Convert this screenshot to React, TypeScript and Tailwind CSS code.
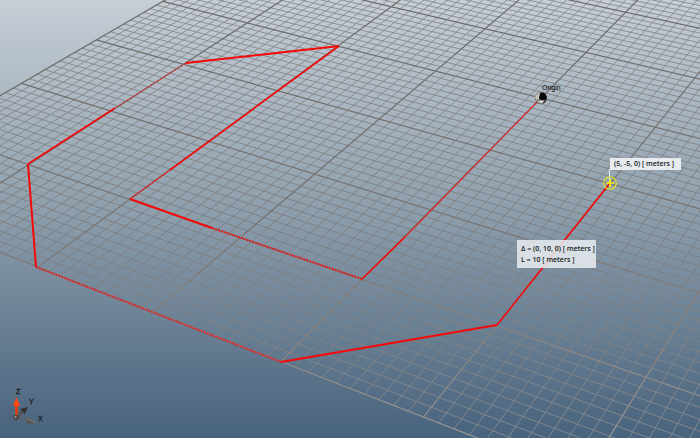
import type { ReactNode } from "react";

type Point = [number, number];

interface PathSegment {
  from: Point;
  to: Point;
  width?: number;
  dash?: string;
  color?: string;
}

interface MeasureLabelProps {
  className: string;
  children: ReactNode;
}

// Ground plane extents, counted in major cells of 5 meters
const MIN_U = -4;
const MAX_U = 7;
const MIN_V = -4;
const MAX_V = 9;
const CELLS_PER_MAJOR = 10;

// Camera projection of a ground point to the viewport
const project = (u: number, v: number): Point => {
  const w = 1 - 0.0402 * u + 0.0658 * v;
  return [(541 + 88 * u + 83.5 * v) / w, (98 + 24.1 * u - 42.1 * v) / w];
};

const gridPath = (major: boolean) => {
  const parts: string[] = [];
  const addLine = (a: Point, b: Point) => {
    parts.push(`M${a[0].toFixed(1)} ${a[1].toFixed(1)}L${b[0].toFixed(1)} ${b[1].toFixed(1)}`);
  };

  for (let i = MIN_U * CELLS_PER_MAJOR; i <= MAX_U * CELLS_PER_MAJOR; i++) {
    if ((i % CELLS_PER_MAJOR === 0) !== major) continue;
    const u = i / CELLS_PER_MAJOR;
    addLine(project(u, MIN_V), project(u, MAX_V));
  }
  for (let i = MIN_V * CELLS_PER_MAJOR; i <= MAX_V * CELLS_PER_MAJOR; i++) {
    if ((i % CELLS_PER_MAJOR === 0) !== major) continue;
    const v = i / CELLS_PER_MAJOR;
    addLine(project(MIN_U, v), project(MAX_U, v));
  }
  return parts.join("");
};

const minorLines = gridPath(false);
const majorLines = gridPath(true);

const segments: PathSegment[] = [
  { from: [541, 98], to: [405, 237], width: 1.2, color: "#d92b2b" },
  { from: [405, 237], to: [362, 279] },
  { from: [362, 279], to: [212, 228], width: 2, dash: "2 1", color: "#e01c1c" },
  { from: [212, 228], to: [130, 199], width: 2 },
  { from: [130, 199], to: [170, 170], dash: "2 1", color: "#e01c1c" },
  { from: [170, 170], to: [339, 46] },
  { from: [339, 46], to: [186, 63], width: 2 },
  { from: [186, 63], to: [115, 108], width: 1.3, dash: "3 1", color: "#c73e3e" },
  { from: [115, 108], to: [28, 164] },
  { from: [28, 164], to: [36, 267], width: 2 },
  { from: [36, 267], to: [281, 362], width: 2, dash: "2 1", color: "#dc2626" },
  { from: [281, 362], to: [497, 325], width: 2 },
  { from: [497, 325], to: [610, 183] },
];

const Ground = () => (
  <>
    <defs>
      <linearGradient id="minor" gradientUnits="userSpaceOnUse" x1="0" y1="0" x2="0" y2="438">
        <stop offset="0" stopColor="#858789" />
        <stop offset="0.5" stopColor="#7b7c7d" />
        <stop offset="0.75" stopColor="#828080" />
        <stop offset="1" stopColor="#8b8d90" />
      </linearGradient>
      <linearGradient id="major" gradientUnits="userSpaceOnUse" x1="0" y1="0" x2="0" y2="438">
        <stop offset="0" stopColor="#6c6968" />
        <stop offset="0.5" stopColor="#77726f" />
        <stop offset="0.75" stopColor="#8a817b" />
        <stop offset="1" stopColor="#9a9795" />
      </linearGradient>
    </defs>
    <path d={minorLines} fill="none" stroke="url(#minor)" strokeWidth="0.85" />
    <path d={majorLines} fill="none" stroke="url(#major)" strokeWidth="1.2" />
  </>
);

const MeasuredPath = () => (
  <g fill="none">
    {segments.map(({ from, to, width = 1.6, dash, color = "#f60808" }) => (
      <line
        key={`${from}-${to}`}
        x1={from[0]}
        y1={from[1]}
        x2={to[0]}
        y2={to[1]}
        stroke={color}
        strokeWidth={width}
        strokeDasharray={dash}
      />
    ))}
  </g>
);

const OriginBall = () => (
  <g>
    <circle cx="541" cy="98" r="6" fill="#2c2c2c" />
    <path d="M535 97Q536 93 541 92L539 98L543 102L541 104Q536 103 535 97Z" fill="#c4c4bf" />
    <path d="M540 93L544 93L547 97L544 101L539 99Z" fill="#080808" />
    <path d="M536 100L540 99L543 102L540 104Z" fill="#70706c" />
    <path d="M537 101.5L545 100L542 103Z" fill="#ecece8" />
  </g>
);

const Cursor = () => (
  <g fill="none">
    <path d="M609.5 169V182" stroke="#e8ecef" />
    <circle cx="610" cy="183" r="6.3" stroke="#e8e51c" strokeWidth="1.1" />
    <path d="M606 183H614M610 179V187" stroke="#fff500" strokeWidth="1.6" />
  </g>
);

const AxisGizmo = () => (
  <g>
    <path d="M17 417L30 420.5" stroke="#656361" strokeWidth="2" />
    <path d="M28.5 417.5L37 423.5L26 423.5Z" fill="#555251" />
    <path d="M28 419L36 423" stroke="#858280" />
    <path d="M17 417L24 410" stroke="#555350" strokeWidth="2.5" />
    <path d="M20 409L28 407L25 414Z" fill="#343230" />
    <path d="M16.5 417V404" stroke="#e63b0c" strokeWidth="2.6" />
    <path d="M16.5 397L20 406H13Z" fill="#ff4b10" />
    <circle cx="16" cy="417.5" r="2.8" fill="#4b4948" />
    <circle cx="15.5" cy="417" r="1" fill="#a09d9a" />
    <g fill="#151a20" fontFamily="Liberation Sans, sans-serif" fontSize="7" stroke="#151a20" strokeWidth="0.3">
      <text x="16" y="394">Z</text>
      <text x="29" y="404">Y</text>
      <text x="38" y="421">X</text>
    </g>
  </g>
);

const MeasureLabel = ({ className, children }: MeasureLabelProps) => (
  <div
    className={`absolute whitespace-nowrap pl-1 font-['Open_Sans',sans-serif] text-[7px] font-semibold text-[#111820] ${className}`}
  >
    {children}
  </div>
);

export default function App() {
  return (
    <main className="relative h-screen w-full overflow-hidden bg-linear-to-b from-[#c6ced6] via-[#8b9caa] to-[#48637d]">
      <svg className="absolute inset-0 size-full" role="img" aria-label="Ground plane with measured path">
        <Ground />
        <MeasuredPath />
        <OriginBall />
        <Cursor />
        <AxisGizmo />
      </svg>

      <span className="absolute left-[542px] top-[84px] font-['Liberation_Sans',sans-serif] text-[7px] leading-[8px] text-black">
        Origin
      </span>
      <MeasureLabel className="left-[610px] top-[158px] bg-[#eceff2]/95 pr-[7px] leading-[12px]">
        (5, -5, 0) [ meters ]
      </MeasureLabel>
      <MeasureLabel className="left-[517px] top-[240px] bg-[#e9edf1]/85 py-[3px] pr-px leading-[11px]">
        <p>Δ = (0, 10, 0) [ meters ]</p>
        <p>L = 10 [ meters ]</p>
      </MeasureLabel>
    </main>
  );
}
